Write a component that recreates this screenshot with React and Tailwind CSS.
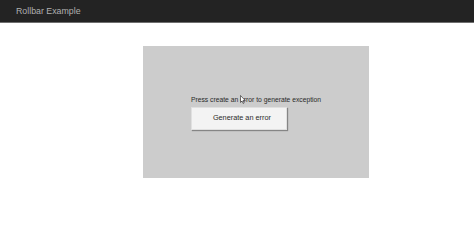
export default function App() {
  return (
    <div className="min-h-screen bg-white" style={{ fontFamily: '"Liberation Sans", Arial, sans-serif' }}>
      <header className="h-[23px] bg-[#232323] border-b border-[#6f6f6f] flex items-center px-[16px]">
        <span className="text-[8.8px] text-[#b0b0b0] leading-none">Rollbar Example</span>
      </header>

      <div className="pt-[23px] pl-[143px]">
        <div className="relative w-[226px] h-[132px] bg-[#cccccc] flex items-center justify-center">
          <div className="flex flex-col items-start pt-[2px]">
            <p className="text-[6.75px] leading-[8px] text-[#2a2a2a]">
              Press create an error to generate exception
            </p>
            <button className="mt-[3px] w-[96px] h-[23px] pl-[6px] bg-[#f3f3f3] border border-[#e0e0e0] shadow-[1px_1px_1px_rgba(0,0,0,0.35)] text-[7.3px] text-[#2a2a2a]">
              Generate an error
            </button>
          </div>

          <svg
            className="absolute left-[97px] top-[49px]"
            width="6"
            height="9"
            viewBox="0 0 6 9"
          >
            <path d="M0.5 0.5 L0.5 7.5 L2 6 L3.2 8.5 L4.2 8 L3 5.5 L5.2 5.5 Z" fill="#fff" stroke="#222" strokeWidth="0.6" />
          </svg>
        </div>
      </div>
    </div>
  );
}
